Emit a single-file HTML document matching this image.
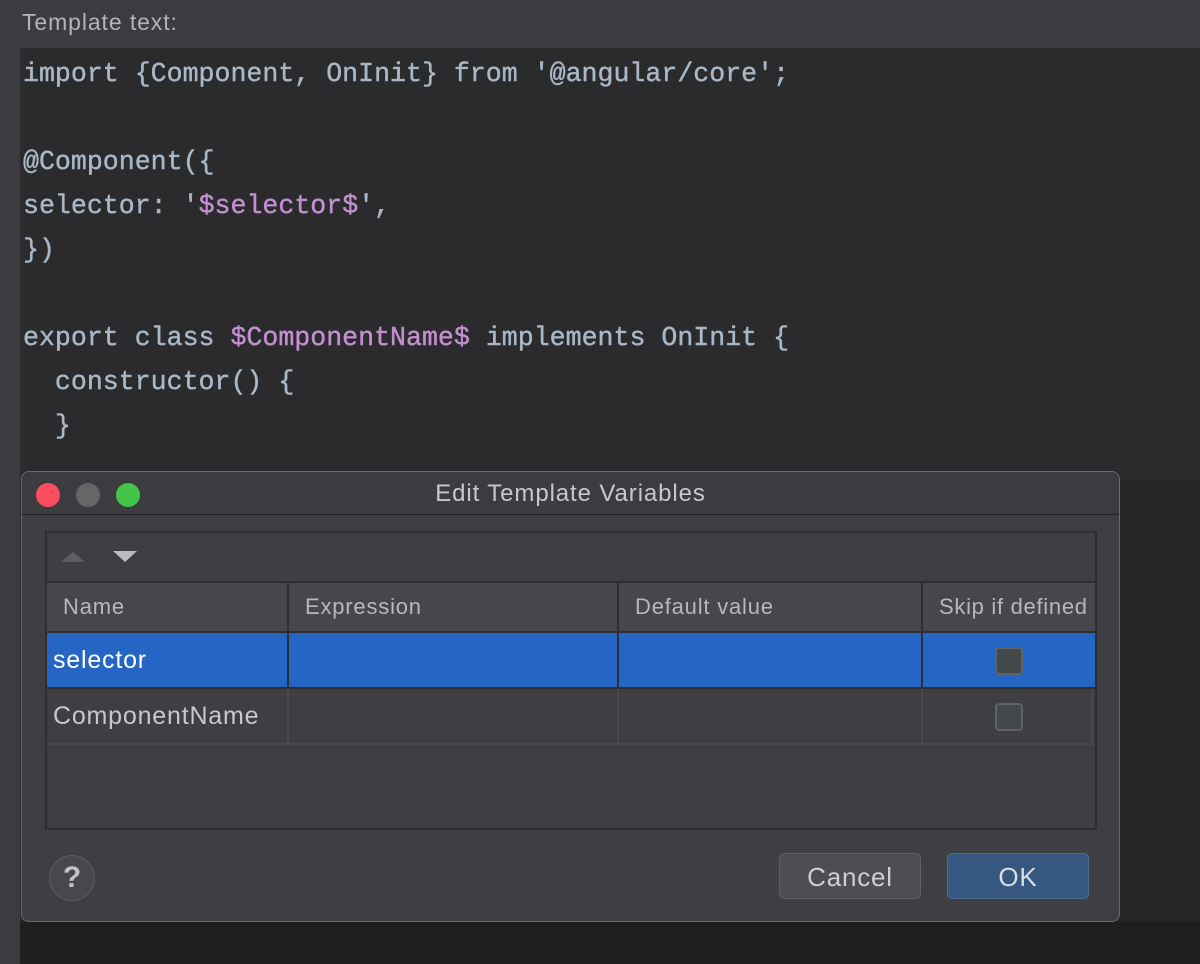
<!DOCTYPE html>
<html><head><style>
body{margin:0;width:1200px;height:964px;background:#3b3b40;position:relative;overflow:hidden;font-family:"Liberation Sans",sans-serif}
.lbl{position:absolute;left:22px;top:9px;font-size:23px;letter-spacing:0.9px;color:#b4b4b8}
.ed{position:absolute;left:20px;top:48px;width:1180px;height:916px;background:#2b2b2e}
.code{position:absolute;left:23px;top:52px;font-family:"Liberation Mono",monospace;font-size:26.6px;line-height:44px;color:#a9b7c6;white-space:pre;-webkit-text-stroke:0.4px #a9b7c6}
.v{color:#c38fd0;-webkit-text-stroke:0.4px #c38fd0}
.shade{position:absolute;left:20px;top:921px;width:1180px;height:43px;background:#1f1f1f}
.shade2{position:absolute;left:1119px;top:480px;width:81px;height:441px;background:#262628}
.dlg{position:absolute;left:21px;top:471px;width:1097px;height:449px;background:#3e3e43;border:1px solid #6a6a6e;border-radius:8px;overflow:hidden}
.tb{height:42px;border-bottom:1px solid #222;background:#3c3c40;text-align:center;line-height:44px;font-size:24px;letter-spacing:0.9px;color:#c8c8c8}
.dot{position:absolute;top:11px;width:24px;height:24px;border-radius:50%}
.tbl{position:absolute;left:23px;top:59px;width:1048px;height:295px;border:2px solid #2e2e32;background:#3e3e43}
.tool{height:48px;border-bottom:2px solid #2e2e32}
.row{position:absolute;left:0;width:1048px;font-size:25px;letter-spacing:0.8px}
.c{position:absolute;top:0;height:100%;border-right:2px solid #2e2e32;box-sizing:border-box}
.cb{position:absolute;left:72px;width:24px;height:24px;border:2px solid #606266;border-radius:4px;background:#43484a}
.btn{position:absolute;top:381px;height:44px;border-radius:5px;font-size:26px;letter-spacing:0.8px;text-align:center;line-height:46px;color:#cfcfcf}
</style></head><body>
<div class="lbl">Template text:</div>
<div class="ed"></div>
<div class="code">import {Component, OnInit} from '@angular/core';

@Component({
selector: '<span class="v">$selector$</span>',
})

export class <span class="v">$ComponentName$</span> implements OnInit {
  constructor() {
  }</div>
<div class="shade2"></div>
<div class="shade"></div>
<div class="dlg">
 <div class="tb">Edit Template Variables</div>
 <div class="dot" style="left:14px;background:#fd4c5e"></div>
 <div class="dot" style="left:54px;background:#666"></div>
 <div class="dot" style="left:94px;background:#41c447"></div>
 <div class="tbl">
  <div class="tool">
   <svg width="120" height="48" style="position:absolute;left:0;top:0"><path d="M14 29 L26 19 L38 29Z" fill="#5d5e62"/><path d="M66 18 L90 18 L78 29Z" fill="#b9bdc1"/></svg>
  </div>
  <div class="row" style="top:50px;height:48px;border-bottom:2px solid #2e2e32;background:#46464b;color:#b8b8bc;font-size:22px;line-height:48px">
   <div class="c" style="left:0;width:242px;padding-left:16px">Name</div>
   <div class="c" style="left:242px;width:330px;padding-left:16px">Expression</div>
   <div class="c" style="left:572px;width:304px;padding-left:16px">Default value</div>
   <div class="c" style="left:876px;width:172px;padding-left:16px;border:none;letter-spacing:0.7px">Skip if defined</div>
  </div>
  <div class="row" style="top:100px;height:54px;background:#2566c4;color:#fff;line-height:54px;border-bottom:2px solid #2e2e32">
   <div class="c" style="left:0;width:242px;padding-left:6px">selector</div>
   <div class="c" style="left:242px;width:330px"></div>
   <div class="c" style="left:572px;width:304px"></div>
   <div class="cb" style="left:948px;top:14px"></div>
  </div>
  <div class="row" style="top:156px;height:54px;color:#c8c8cc;line-height:54px;border-bottom:2px solid #4a4a4e;width:1046px">
   <div class="c" style="left:0;width:242px;padding-left:6px;border-color:#4a4a4e">ComponentName</div>
   <div class="c" style="left:242px;width:330px;border-color:#4a4a4e"></div>
   <div class="c" style="left:572px;width:304px;border-color:#4a4a4e"></div>
   <div class="c" style="left:876px;width:170px;border-color:#4a4a4e"></div>
   <div class="cb" style="left:948px;top:14px"></div>
  </div>
 </div>
 <div style="position:absolute;left:27px;top:383px;width:44px;height:44px;border-radius:50%;border:1px solid #5a5a5e;background:#47474c;color:#c0c4c8;font-size:30px;font-weight:bold;text-align:center;line-height:44px">?</div>
 <div class="btn" style="left:757px;width:140px;background:#4c4e52;border:1px solid #606266">Cancel</div>
 <div class="btn" style="left:925px;width:140px;background:#365880;border:1px solid #4a6e96;color:#d8dde2">OK</div>
</div>
</body></html>
